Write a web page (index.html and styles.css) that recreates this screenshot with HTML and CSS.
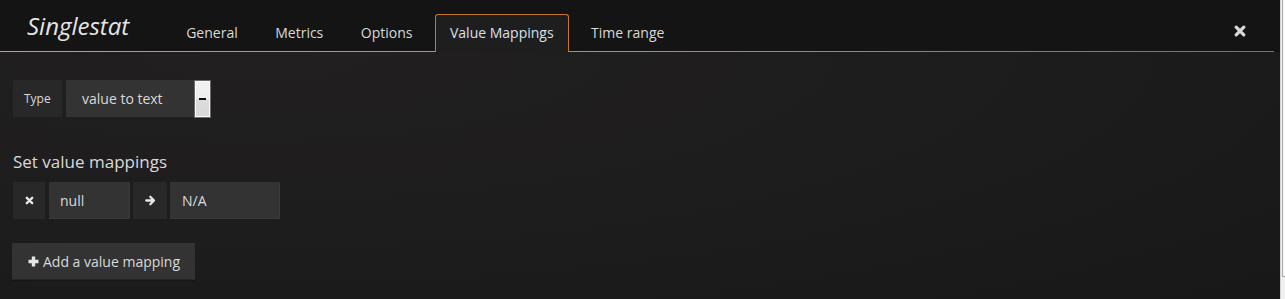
FILE: index.html
```html
<!DOCTYPE html>
<html lang="en">
<head>
<meta charset="utf-8">
<title>Singlestat</title>
<link rel="stylesheet" href="styles.css">
</head>
<body>
<div class="app">
  <div class="panel">
    <div class="editor-header">
      <div class="header-inner">
        <div class="title">Singlestat</div>
        <ul class="tabs">
          <li class="tab">General</li>
          <li class="tab">Metrics</li>
          <li class="tab">Options</li>
          <li class="tab active">Value Mappings</li>
          <li class="tab">Time range</li>
        </ul>
        <div class="close">
          <svg viewBox="0 0 12 12" width="12" height="12"><path d="M2.2 2.2 L9.8 9.8 M9.8 2.2 L2.2 9.8" stroke="#d8d9da" stroke-width="3.2" stroke-linecap="round" fill="none"/></svg>
        </div>
      </div>
    </div>
    <div class="content">
      <div class="form-row">
        <div class="label type-label">Type</div>
        <div class="select">
          <span class="select-text">value to text</span>
          <div class="spin"><span class="dash"></span></div>
        </div>
      </div>

      <h5 class="section-title">Set value mappings</h5>

      <div class="form-row mapping">
        <div class="label icon-label x-label">
          <svg viewBox="0 0 9 9" width="9" height="9"><path d="M1.8 1.8 L7.2 7.2 M7.2 1.8 L1.8 7.2" stroke="#e4e5e6" stroke-width="2.4" stroke-linecap="round" fill="none"/></svg>
        </div>
        <div class="input input-from">null</div>
        <div class="label icon-label arrow-label">
          <svg viewBox="0 0 11 11" width="11" height="11"><path d="M1.3 5.5 H8.6 M5.3 1.8 L9 5.5 L5.3 9.2" stroke="#e4e5e6" stroke-width="2.3" stroke-linecap="round" stroke-linejoin="round" fill="none"/></svg>
        </div>
        <div class="input input-to">N/A</div>
      </div>

      <button class="btn-add">
        <svg class="plus" viewBox="0 0 11 11" width="11" height="11"><path d="M5.5 0.5 V10.5 M0.5 5.5 H10.5" stroke="#e4e5e6" stroke-width="3.4" fill="none"/></svg>
        <span>Add a value mapping</span>
      </button>
    </div>
  </div>
  <div class="scrollbar"><div class="thumb"></div></div>
</div>
</body>
</html>
```
FILE: styles.css
```css
* { box-sizing: border-box; }

html, body {
  margin: 0;
  padding: 0;
  height: 100%;
  background: #141414;
}

body {
  font-family: "Open Sans", "Noto Sans", "Liberation Sans", sans-serif;
  color: #d8d9da;
  font-size: 14px;
  overflow: hidden;
}

.app {
  display: flex;
  height: 299px;
}

.panel {
  flex: 1;
  display: flex;
  flex-direction: column;
  min-width: 0;
}

.editor-header {
  background: #141414;
  padding-right: 6px;
}

.header-inner {
  display: flex;
  align-items: flex-start;
  height: 52px;
  border-bottom: 1px solid #d0a020;
  border-image: linear-gradient(to right, #d3a820 0%, #d98a1f 45%, #d05418 100%) 1;
}

.title {
  margin-left: 27px;
  margin-right: 42px;
  padding-top: 14px;
  font-size: 24px;
  line-height: 24px;
  font-style: italic;
  color: #e3e4e5;
  white-space: nowrap;
}

.tabs {
  display: flex;
  list-style: none;
  margin: 14px 0 0 0;
  padding: 0;
  gap: 7.5px;
}

.tab {
  height: 38px;
  padding: 8px 14px 9px;
  border: 1px solid transparent;
  border-bottom: none;
  border-radius: 3px 3px 0 0;
  line-height: 20px;
  font-size: 14px;
  color: #d8d9da;
  white-space: nowrap;
  position: relative;
}

.tab.active {
  border-color: #c4772c;
  background: #1f1e1f;
  color: #d8e0ea;
}

.close {
  margin-left: auto;
  margin-top: 25px;
  margin-right: 28px;
  width: 12px;
  height: 12px;
  display: flex;
}

.content {
  flex: 1;
  padding: 28px 0 0 13px;
  background: radial-gradient(ellipse 120% 160% at 20% 0%, #211f20 0%, #1e1d1d 45%, #181717 100%);
}

.form-row {
  display: flex;
  height: 37px;
}

.label {
  background: #282828;
  height: 37px;
  line-height: 37px;
  white-space: nowrap;
}

.type-label {
  width: 49px;
  padding: 0 11px;
  font-size: 12px;
  color: #d8d9da;
}

.select {
  margin-left: 4px;
  width: 145px;
  height: 37px;
  background: #333333;
  display: flex;
  position: relative;
  line-height: 37px;
}

.select-text {
  padding-left: 16px;
  flex: 1;
}

.spin {
  width: 17px;
  height: 38px;
  border: 1px solid #6a6a6a;
  box-shadow: inset 0 0 0 1px #fbfbfb;
  background: linear-gradient(#f1f1f1 0%, #eeeeee 50%, #dcdcdc 50%, #d9d9d9 100%);
  display: flex;
  align-items: center;
  justify-content: center;
}

.dash {
  width: 7px;
  height: 1.5px;
  background: #111;
}

.section-title {
  margin: 35px 0 10px;
  font-size: 17px;
  line-height: 20px;
  font-weight: 400;
  color: #d8d9da;
}

.icon-label {
  display: flex;
  align-items: center;
  justify-content: center;
}

.x-label { width: 32px; }

.arrow-label {
  width: 34px;
  margin-left: 3px;
}

.input {
  background: #333333;
  height: 37px;
  line-height: 37px;
  padding: 0 11px;
  font-size: 14px;
  box-shadow: inset -1px -1px 0 #3a3a3a;
}

.input-from {
  width: 81px;
  margin-left: 4px;
}

.input-to {
  width: 110px;
  margin-left: 3px;
  padding-left: 12px;
}

.btn-add {
  margin: 24px 0 0 -1px;
  width: 183px;
  height: 37px;
  background: #333333;
  border: none;
  box-shadow: inset 0 -1px 0 #262626, 0 1px 0 #151515;
  color: #d8d9da;
  font-family: inherit;
  font-size: 14px;
  line-height: 37px;
  padding: 0 0 0 16px;
  display: flex;
  align-items: center;
  gap: 4px;
  cursor: pointer;
}

.plus { flex: none; }

.scrollbar {
  width: 5px;
  background: #f0f0f0;
  border-left: 1px solid #d2d2d2;
}

.thumb {
  height: 277px;
  background: #f7f7f7;
  border-left: 1px solid #a9a9a9;
  border-bottom: 1px solid #a9a9a9;
  margin-left: 1px;
}
```
